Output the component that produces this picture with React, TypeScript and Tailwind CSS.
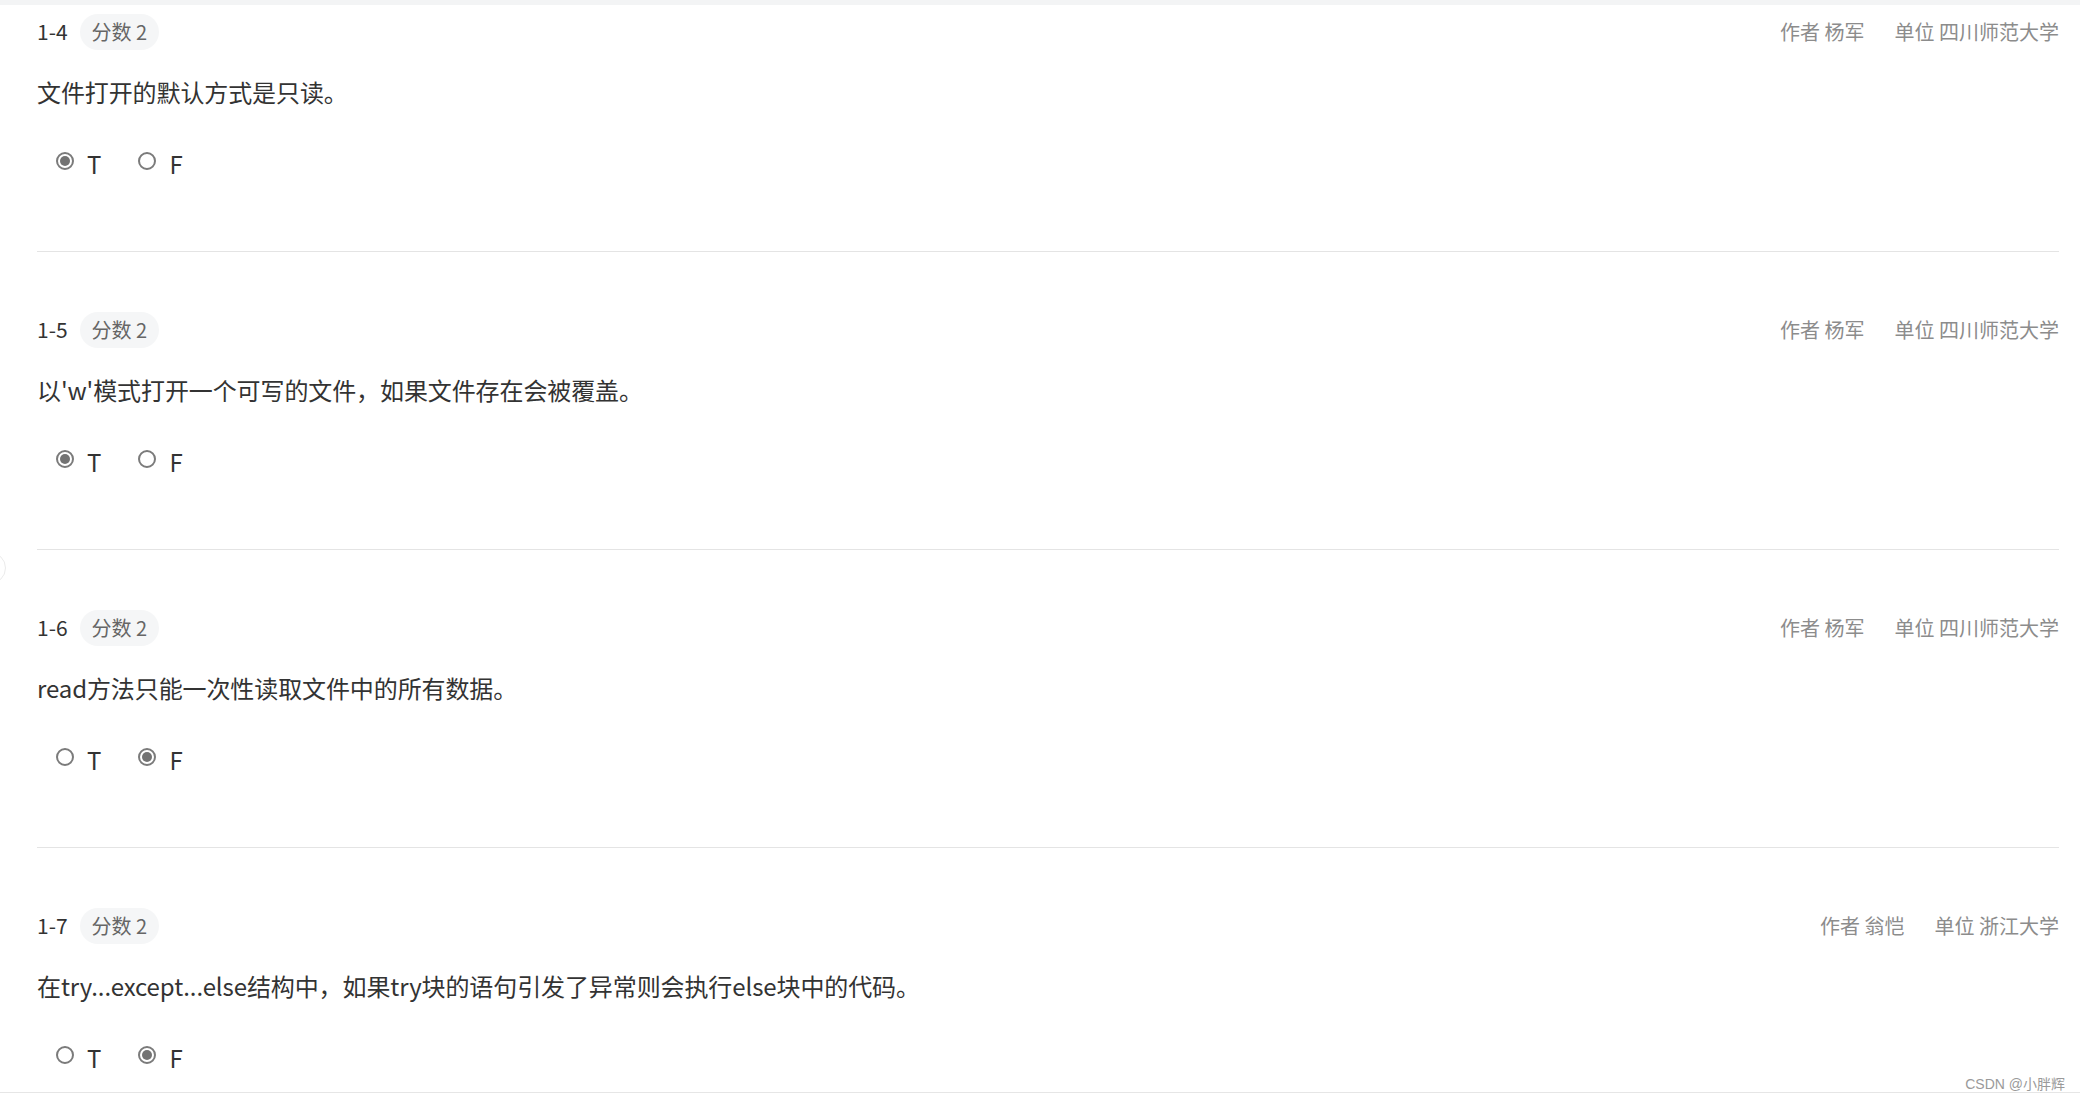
type Question = {
  no: string
  text: string
  answer: 'T' | 'F'
  author: string
  unit: string
}

const questions: Question[] = [
  { no: '1-4', text: '文件打开的默认方式是只读。', answer: 'T', author: '杨军', unit: '四川师范大学' },
  { no: '1-5', text: "以'w'模式打开一个可写的文件，如果文件存在会被覆盖。", answer: 'T', author: '杨军', unit: '四川师范大学' },
  { no: '1-6', text: 'read方法只能一次性读取文件中的所有数据。', answer: 'F', author: '杨军', unit: '四川师范大学' },
  { no: '1-7', text: '在try...except...else结构中，如果try块的语句引发了异常则会执行else块中的代码。', answer: 'F', author: '翁恺', unit: '浙江大学' },
]

function Radio({ label, checked }: { label: string; checked: boolean }) {
  return (
    <label className="flex items-center">
      <span className="w-[18px] h-[18px] rounded-full border-2 border-[#7b7b7b] bg-white flex items-center justify-center">
        {checked && <span className="w-[10px] h-[10px] rounded-full bg-[#737373]" />}
      </span>
      <span className="ml-[13px] pt-[6px] text-[24px] leading-[30px] text-[#333]">{label}</span>
    </label>
  )
}

function QuestionItem({ q }: { q: Question }) {
  return (
    <div className="pt-[60px] first:pt-[9px] pb-[72px] border-b border-[#e4e4e4]">
      {/* 题号 + 分数 + 作者信息 */}
      <div className="flex items-center justify-between h-[36px]">
        <div className="flex items-center">
          <span className="text-[21px] text-[#333]">{q.no}</span>
          <span className="ml-[12px] h-[36px] px-[12px] rounded-full bg-[#f5f6f7] flex items-center text-[20px] text-[#666]">
            分数&nbsp;2
          </span>
        </div>
        <div className="flex items-center gap-[30px] text-[20px] text-[#8c8c8c]">
          <span>作者 {q.author}</span>
          <span>单位 {q.unit}</span>
        </div>
      </div>

      <p className="mt-[24px] text-[24px] leading-[36px] text-[#333] tracking-[-0.1px]">{q.text}</p>

      <div className="mt-[33px] h-[36px] flex items-center pl-[19px] gap-[37px]">
        <Radio label="T" checked={q.answer === 'T'} />
        <Radio label="F" checked={q.answer === 'F'} />
      </div>
    </div>
  )
}

export default function App() {
  return (
    <div
      className="relative h-[1102px] overflow-hidden bg-white flex flex-col"
      style={{ fontFamily: '"Noto Sans CJK SC", "Noto Sans", sans-serif' }}
    >
      <div className="h-[5px] bg-[#f3f4f5] shrink-0" />

      <div className="flex-1 overflow-hidden pl-[37px] pr-[21px]">
        {questions.map((q) => (
          <QuestionItem key={q.no} q={q} />
        ))}
      </div>

      <div className="h-[10px] shrink-0 border-t border-[#e6e6e6] bg-white" />

      {/* 左侧折叠按钮 */}
      <div className="absolute left-[-26px] top-[552px] w-[32px] h-[32px] rounded-full border border-[#ebebeb] bg-white" />

      {/* 水印 */}
      <span
        className="absolute right-[15px] bottom-[10px] text-[14px] leading-[16px] text-[#9a9a9a]"
        style={{ fontFamily: '"Liberation Sans", "Noto Sans CJK SC", sans-serif' }}
      >
        CSDN @小胖辉
      </span>
    </div>
  )
}
